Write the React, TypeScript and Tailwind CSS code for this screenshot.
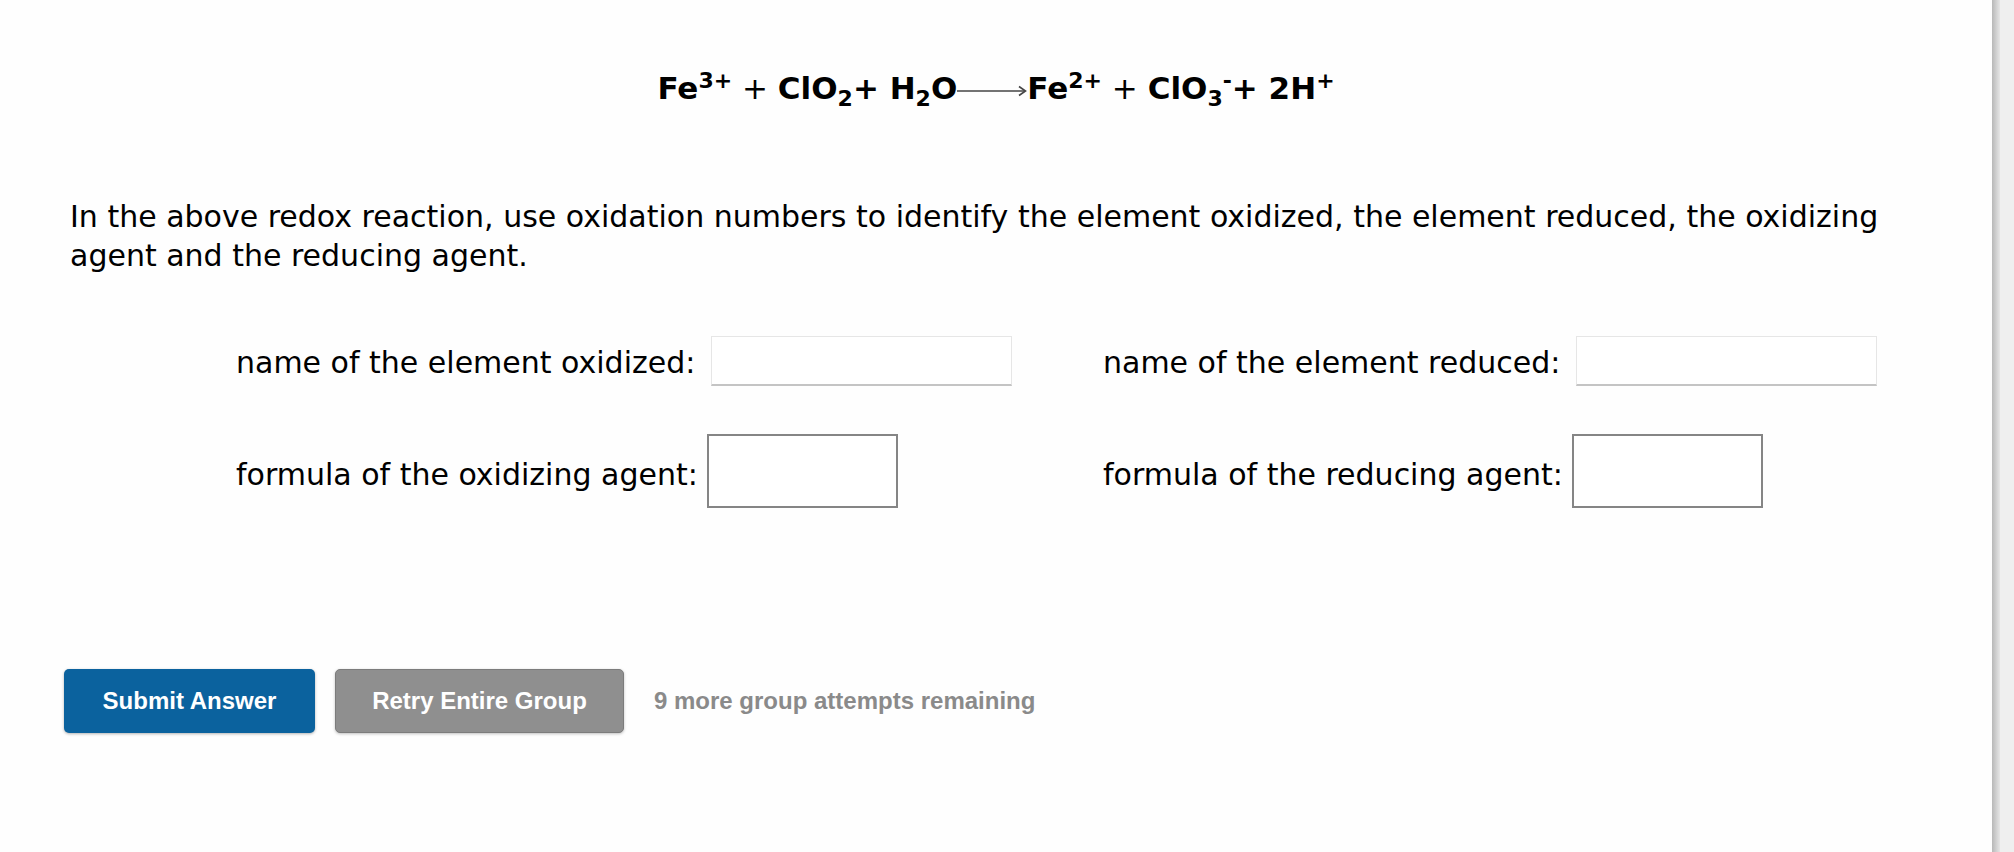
export default function App() {
  return (
    <div className="flex w-[2014px] h-[852px] overflow-hidden bg-white text-black [font-family:'DejaVu_Sans',Verdana,sans-serif]">
      <main className="w-[1992px] shrink-0 bg-[#fefefe]">
        {/* Equation */}
        <div className="mt-[68px] h-[40px] leading-[40px] text-center text-[31px] font-bold whitespace-nowrap">
          <span>Fe</span>
          <span className="align-[11px] text-[22px] leading-none">3+</span>
          <span className="font-normal"> + </span>
          <span>ClO</span>
          <span className="align-[-7px] text-[22px] leading-none">2</span>
          <span>+ H</span>
          <span className="align-[-7px] text-[22px] leading-none">2</span>
          <span>O</span>
          <svg
            className="inline-block align-middle"
            width="70"
            height="14"
            viewBox="0 0 70 14"
          >
            <line x1="0" y1="7" x2="68" y2="7" stroke="#444" strokeWidth="1.6" />
            <path d="M62 2.5 L68.5 7 L62 11.5" fill="none" stroke="#444" strokeWidth="1.6" />
          </svg>
          <span>Fe</span>
          <span className="align-[11px] text-[22px] leading-none">2+</span>
          <span className="font-normal"> + </span>
          <span>ClO</span>
          <span className="align-[-7px] text-[22px] leading-none">3</span>
          <span className="align-[11px] text-[22px] leading-none">-</span>
          <span>+ 2H</span>
          <span className="align-[11px] text-[22px] leading-none">+</span>
        </div>

        {/* Paragraph */}
        <p className="mt-[89px] pl-[70px] text-[30px] leading-[39px]">
          In the above redox reaction, use oxidation numbers to identify the element oxidized, the element reduced, the oxidizing
          <br />
          agent and the reducing agent.
        </p>

        {/* Form */}
        <div className="mt-[61px] pl-[236px] text-[30px]">
          <div className="flex items-center h-[50px]">
            <div className="w-[867px] flex items-center">
              <span className="pt-[2px]">name of the element oxidized:</span>
              <div className="ml-[16px] w-[301px] h-[50px] bg-white border border-[#e6e6e6] border-b-2 border-b-[#c4c4c4]" />
            </div>
            <div className="flex items-center">
              <span className="pt-[2px]">name of the element reduced:</span>
              <div className="ml-[16px] w-[301px] h-[50px] bg-white border border-[#e6e6e6] border-b-2 border-b-[#c4c4c4]" />
            </div>
          </div>
          <div className="mt-[48px] flex items-center h-[74px]">
            <div className="w-[867px] flex items-center">
              <span className="pt-[6px]">formula of the oxidizing agent:</span>
              <div className="ml-[9px] w-[191px] h-[74px] bg-white border-2 border-[#858585]" />
            </div>
            <div className="flex items-center">
              <span className="pt-[6px]">formula of the reducing agent:</span>
              <div className="ml-[9px] w-[191px] h-[74px] bg-white border-2 border-[#858585]" />
            </div>
          </div>
        </div>

        {/* Buttons */}
        <div className="mt-[161px] pl-[64px] flex items-center [font-family:'Liberation_Sans',Arial,sans-serif] font-bold text-[24px]">
          <button className="w-[251px] h-[64px] rounded-[5px] bg-[#0b629e] text-white shadow-[0_1px_3px_rgba(0,0,0,0.3)]">
            Submit Answer
          </button>
          <button className="ml-[20px] w-[289px] h-[64px] rounded-[5px] bg-[#8f8f8f] border border-[#7c7c7c] text-white shadow-[0_1px_3px_rgba(0,0,0,0.25)]">
            Retry Entire Group
          </button>
          <span className="ml-[30px] text-[#8a8a8a]">9 more group attempts remaining</span>
        </div>
      </main>
      <div className="flex-1 flex">
        <div className="w-[8px] bg-gradient-to-r from-[#b8b8b8] to-[#e6e6e6]" />
        <div className="flex-1 bg-[#efefef]" />
      </div>
    </div>
  );
}
